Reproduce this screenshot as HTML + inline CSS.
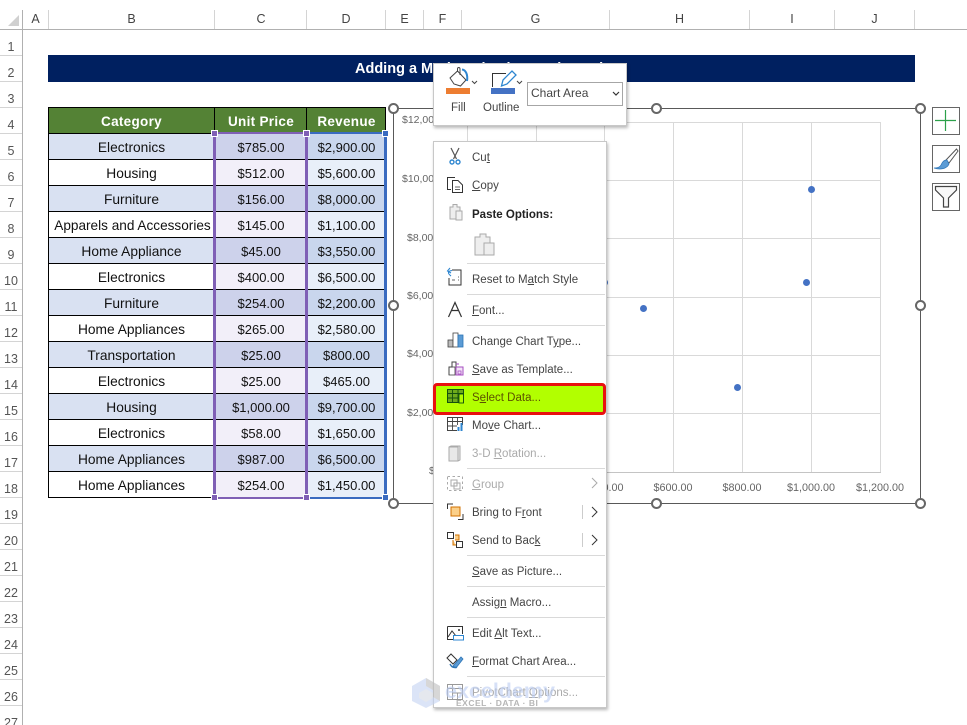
<!DOCTYPE html>
<html><head><meta charset="utf-8">
<style>
html,body{margin:0;padding:0;background:#fff}
#p{position:relative;width:967px;height:725px;overflow:hidden;font-family:"Liberation Sans",sans-serif;background:#fff}
#p div{position:absolute;box-sizing:border-box}
.ch{top:10px;height:19px;line-height:19px;text-align:center;font-size:12.5px;color:#444;border-right:1px solid #d4d4d4}
.rh{left:0;width:22px;height:26px;line-height:35px;text-align:center;font-size:12.5px;color:#555;border-bottom:1px solid #d4d4d4}
.c{height:26px;line-height:30px;text-align:center;font-size:13px;color:#111;white-space:nowrap}
.c[style^="left:48px"]{font-size:13.75px}
.h{font-weight:bold;color:#fff;background:#548235;letter-spacing:.3px}
.m{left:472px;height:16px;line-height:18px;font-size:11.5px;color:#444;white-space:nowrap}
.g{color:#aaa}
.s{left:467px;width:138px;height:1px;background:#d9d9d9}
.hd{width:11px;height:11px;border:2px solid #666;border-radius:50%;background:#fff}
.sq{width:7px;height:7px}
.yl{left:402px;width:60px;font-size:10.5px;color:#666;height:14px;line-height:14px;white-space:nowrap}
.xl{top:481px;width:70px;text-align:center;font-size:10.8px;color:#666;height:14px;line-height:14px}
.gv{top:122px;width:1px;height:350px;background:#d9d9d9}
.gh{left:467px;width:414px;height:1px;background:#d9d9d9}
.dot{width:7px;height:7px;border-radius:50%;background:#4472c4}
svg{position:absolute;overflow:visible}
</style></head><body><div id="p">

<!-- column headers -->
<div style="left:0;top:29px;width:967px;height:1px;background:#b0b0b0"></div>
<div style="left:22px;top:10px;width:1px;height:715px;background:#b0b0b0"></div>
<svg style="left:7px;top:14px" width="13" height="13"><path d="M12 1V12H1Z" fill="#d0d0d0"/></svg>
<div class="ch" style="left:22px;width:27px;padding-left:1px">A</div>
<div class="ch" style="left:49px;width:166px">B</div>
<div class="ch" style="left:215px;width:92px;padding-left:1px">C</div>
<div class="ch" style="left:307px;width:79px">D</div>
<div class="ch" style="left:386px;width:38px">E</div>
<div class="ch" style="left:424px;width:38px">F</div>
<div class="ch" style="left:462px;width:148px">G</div>
<div class="ch" style="left:610px;width:140px">H</div>
<div class="ch" style="left:750px;width:85px">I</div>
<div class="ch" style="left:835px;width:80px">J</div>

<!-- row headers -->
<div class="rh" style="top:30px">1</div><div class="rh" style="top:56px">2</div><div class="rh" style="top:82px">3</div><div class="rh" style="top:108px">4</div><div class="rh" style="top:134px">5</div><div class="rh" style="top:160px">6</div><div class="rh" style="top:186px">7</div><div class="rh" style="top:212px">8</div><div class="rh" style="top:238px">9</div><div class="rh" style="top:264px">10</div><div class="rh" style="top:290px">11</div><div class="rh" style="top:316px">12</div><div class="rh" style="top:342px">13</div><div class="rh" style="top:368px">14</div><div class="rh" style="top:394px">15</div><div class="rh" style="top:420px">16</div><div class="rh" style="top:446px">17</div><div class="rh" style="top:472px">18</div><div class="rh" style="top:498px">19</div><div class="rh" style="top:524px">20</div><div class="rh" style="top:550px">21</div><div class="rh" style="top:576px">22</div><div class="rh" style="top:602px">23</div><div class="rh" style="top:628px">24</div><div class="rh" style="top:654px">25</div><div class="rh" style="top:680px">26</div><div class="rh" style="top:706px">27</div>

<!-- title -->
<div style="left:48px;top:55px;width:867px;height:27px;background:#002060;color:#fff;font-weight:bold;font-size:14.5px;line-height:29px;text-align:left;padding-left:307px;white-space:nowrap">Adding a Marker Line in Excel Graph</div>

<!-- table header -->
<div class="c h" style="left:48px;top:107px;width:167px;font-size:13.5px;line-height:30px">Category</div>
<div class="c h" style="left:215px;top:107px;width:92px;font-size:13.5px;line-height:30px">Unit Price</div>
<div class="c h" style="left:307px;top:107px;width:79px;font-size:13.5px;line-height:30px">Revenue</div>

<!-- rows -->
<div class="c" style="left:48px;top:133px;width:167px;background:#d9e1f2">Electronics</div><div class="c" style="left:215px;top:133px;width:92px;background:#cdd2eb">$785.00</div><div class="c" style="left:307px;top:133px;width:79px;background:#c9d6ed">$2,900.00</div>
<div class="c" style="left:48px;top:159px;width:167px">Housing</div><div class="c" style="left:215px;top:159px;width:92px;background:#f2eff9">$512.00</div><div class="c" style="left:307px;top:159px;width:79px;background:#e8eff9">$5,600.00</div>
<div class="c" style="left:48px;top:185px;width:167px;background:#d9e1f2">Furniture</div><div class="c" style="left:215px;top:185px;width:92px;background:#cdd2eb">$156.00</div><div class="c" style="left:307px;top:185px;width:79px;background:#c9d6ed">$8,000.00</div>
<div class="c" style="left:49px;top:211px;width:167px;font-size:13.6px">Apparels and Accessories</div><div class="c" style="left:215px;top:211px;width:92px;background:#f2eff9">$145.00</div><div class="c" style="left:307px;top:211px;width:79px;background:#e8eff9">$1,100.00</div>
<div class="c" style="left:48px;top:237px;width:167px;background:#d9e1f2">Home Appliance</div><div class="c" style="left:215px;top:237px;width:92px;background:#cdd2eb">$45.00</div><div class="c" style="left:307px;top:237px;width:79px;background:#c9d6ed">$3,550.00</div>
<div class="c" style="left:48px;top:263px;width:167px">Electronics</div><div class="c" style="left:215px;top:263px;width:92px;background:#f2eff9">$400.00</div><div class="c" style="left:307px;top:263px;width:79px;background:#e8eff9">$6,500.00</div>
<div class="c" style="left:48px;top:289px;width:167px;background:#d9e1f2">Furniture</div><div class="c" style="left:215px;top:289px;width:92px;background:#cdd2eb">$254.00</div><div class="c" style="left:307px;top:289px;width:79px;background:#c9d6ed">$2,200.00</div>
<div class="c" style="left:48px;top:315px;width:167px">Home Appliances</div><div class="c" style="left:215px;top:315px;width:92px;background:#f2eff9">$265.00</div><div class="c" style="left:307px;top:315px;width:79px;background:#e8eff9">$2,580.00</div>
<div class="c" style="left:48px;top:341px;width:167px;background:#d9e1f2">Transportation</div><div class="c" style="left:215px;top:341px;width:92px;background:#cdd2eb">$25.00</div><div class="c" style="left:307px;top:341px;width:79px;background:#c9d6ed">$800.00</div>
<div class="c" style="left:48px;top:367px;width:167px">Electronics</div><div class="c" style="left:215px;top:367px;width:92px;background:#f2eff9">$25.00</div><div class="c" style="left:307px;top:367px;width:79px;background:#e8eff9">$465.00</div>
<div class="c" style="left:48px;top:393px;width:167px;background:#d9e1f2">Housing</div><div class="c" style="left:215px;top:393px;width:92px;background:#cdd2eb">$1,000.00</div><div class="c" style="left:307px;top:393px;width:79px;background:#c9d6ed">$9,700.00</div>
<div class="c" style="left:48px;top:419px;width:167px">Electronics</div><div class="c" style="left:215px;top:419px;width:92px;background:#f2eff9">$58.00</div><div class="c" style="left:307px;top:419px;width:79px;background:#e8eff9">$1,650.00</div>
<div class="c" style="left:48px;top:445px;width:167px;background:#d9e1f2">Home Appliances</div><div class="c" style="left:215px;top:445px;width:92px;background:#cdd2eb">$987.00</div><div class="c" style="left:307px;top:445px;width:79px;background:#c9d6ed">$6,500.00</div>
<div class="c" style="left:48px;top:471px;width:167px">Home Appliances</div><div class="c" style="left:215px;top:471px;width:92px;background:#f2eff9">$254.00</div><div class="c" style="left:307px;top:471px;width:79px;background:#e8eff9">$1,450.00</div>

<!-- table grid lines -->
<svg style="left:0;top:0" width="967" height="725"><g stroke="#000" stroke-width="1" shape-rendering="crispEdges"><path d="M48 107.5H385M48 133.5H385M48 159.5H385M48 185.5H385M48 211.5H385M48 237.5H385M48 263.5H385M48 289.5H385M48 315.5H385M48 341.5H385M48 367.5H385M48 393.5H385M48 419.5H385M48 445.5H385M48 471.5H385M48 497.5H385"/><path d="M48.5 107V498M214.5 107V133M306.5 107V133M385.5 107V133"/></g></svg>

<!-- selection -->
<div style="left:213px;top:132px;width:95px;height:367px;border:solid #7f5fb5;border-width:2px 3px"></div>
<div style="left:308px;top:132px;width:79px;height:367px;border:solid #3a6bc0;border-width:2px 3px 2px 0"></div>
<div class="sq" style="left:211px;top:130px;background:#7f5fb5;border:1px solid #fff"></div>
<div class="sq" style="left:303px;top:130px;background:#7f5fb5;border:1px solid #fff"></div>
<div class="sq" style="left:382px;top:130px;background:#3a6bc0;border:1px solid #fff"></div>
<div class="sq" style="left:211px;top:494px;background:#7f5fb5;border:1px solid #fff"></div>
<div class="sq" style="left:303px;top:494px;background:#7f5fb5;border:1px solid #fff"></div>
<div class="sq" style="left:382px;top:494px;background:#3a6bc0;border:1px solid #fff"></div>

<!-- chart -->
<div style="left:393px;top:108px;width:528px;height:396px;border:1px solid #595959;background:#fff"></div>
<div class="gv" style="left:467px"></div><div class="gv" style="left:536px"></div><div class="gv" style="left:604px"></div><div class="gv" style="left:673px"></div><div class="gv" style="left:742px"></div><div class="gv" style="left:811px"></div><div class="gv" style="left:880px"></div>
<div class="gh" style="top:122px"></div><div class="gh" style="top:180px"></div><div class="gh" style="top:238px"></div><div class="gh" style="top:297px"></div><div class="gh" style="top:355px"></div><div class="gh" style="top:413px"></div><div class="gh" style="top:472px;background:#c4c4c4"></div>
<div class="yl" style="top:113px">$12,000.00</div>
<div class="yl" style="top:172px">$10,000.00</div>
<div class="yl" style="top:231px;left:407px">$8,000.00</div>
<div class="yl" style="top:289px;left:407px">$6,000.00</div>
<div class="yl" style="top:347px;left:407px">$4,000.00</div>
<div class="yl" style="top:406px;left:407px">$2,000.00</div>
<div class="yl" style="top:464px;left:429px">$0.00</div>
<div class="xl" style="left:569px">$400.00</div>
<div class="xl" style="left:638px">$600.00</div>
<div class="xl" style="left:707px">$800.00</div>
<div class="xl" style="left:776px">$1,000.00</div>
<div class="xl" style="left:845px">$1,200.00</div>
<div class="dot" style="left:808px;top:186px"></div>
<div class="dot" style="left:803px;top:279px"></div>
<div class="dot" style="left:640px;top:305px"></div>
<div class="dot" style="left:734px;top:384px"></div>
<div class="dot" style="left:601px;top:279px"></div>

<div class="hd" style="left:388px;top:103px"></div>
<div class="hd" style="left:651px;top:103px"></div>
<div class="hd" style="left:915px;top:103px"></div>
<div class="hd" style="left:388px;top:300px"></div>
<div class="hd" style="left:915px;top:300px"></div>
<div class="hd" style="left:388px;top:498px"></div>
<div class="hd" style="left:651px;top:498px"></div>
<div class="hd" style="left:915px;top:498px"></div>

<!-- chart side buttons -->
<div style="left:932px;top:107px;width:28px;height:28px;border:1px solid #666;background:#fff"></div>
<svg style="left:932px;top:107px" width="28" height="28"><path d="M13.500 3V24M3 13.500H24" stroke="#2ca04a" stroke-width="1.200"/></svg>
<div style="left:932px;top:145px;width:28px;height:28px;border:1px solid #666;background:#fff"></div>
<svg style="left:932px;top:145px" width="28" height="28"><path d="M24.500 4 14 15 17 18 26 6Z" fill="#fff" stroke="#555"/><path d="M15 15C11 15 10 18 9 20 8 22 5 23 2 23 8 25 15 24 17 19Z" fill="#5b9bd5" stroke="#2e75b6" stroke-width=".7"/></svg>
<div style="left:932px;top:183px;width:28px;height:28px;border:1px solid #666;background:#fff"></div>
<svg style="left:932px;top:183px" width="28" height="28"><path d="M3.500 3.500H24.500V7L16.500 15V24H11.500V15L3.500 7Z" fill="#f8f8f8" stroke="#444" stroke-width="1.200"/></svg>

<!-- mini toolbar -->
<div style="left:433px;top:63px;width:194px;height:63px;background:#fff;border:1px solid #c8c8c8;box-shadow:1px 2px 3px rgba(0,0,0,.28)"></div>
<svg style="left:433px;top:63px" width="194" height="63">
<path d="M17 15 24.500 8 33 17 27.500 23 21 21Z" fill="#fff" stroke="#444"/><path d="M24.500 9V6C24.500 4 27 4 27 6V12" fill="none" stroke="#444"/><path d="M29 6.500C33 7 35 12 34 18" fill="none" stroke="#2e86d0" stroke-width="2"/>
<rect x="13" y="25" width="24" height="6" fill="#ed7d31"/>
<path d="M39 18 41.500 20.500 44 18" fill="none" stroke="#444"/>
<path d="M73 10.500H59.500V24" fill="none" stroke="#333" stroke-width="1"/><path d="M70 17 79 8 83 12 74 21 68.500 23Z" fill="#fff" stroke="#2e86d0" stroke-width="1.300"/>
<rect x="58" y="25" width="24" height="6" fill="#4472c4"/>
<path d="M84 18 86.500 20.500 89 18" fill="none" stroke="#444"/>
</svg>
<div style="left:451px;top:100px;font-size:11.500px;color:#444;height:14px;line-height:16px">Fill</div>
<div style="left:483px;top:100px;font-size:11.500px;color:#444;height:14px;line-height:16px">Outline</div>
<div style="left:527px;top:82px;width:96px;height:24px;border:1px solid #a6a6a6;background:#fff;font-size:12px;line-height:21px;color:#444;padding-left:3px">Chart Area</div>
<svg style="left:612px;top:91px" width="9" height="6"><path d="M1 1 4 4 7 1" fill="none" stroke="#333" stroke-width="1.200"/></svg>

<!-- context menu -->
<div style="left:433px;top:141px;width:174px;height:567px;background:#fff;border:1px solid #c8c8c8;box-shadow:1px 2px 3px rgba(0,0,0,.28)"></div>

<div style="left:433px;top:383px;width:173px;height:32px;background:#b2ff00;border:3px solid #e81010;border-radius:4px"></div>

<div class="m" style="top:149px">Cu<u>t</u></div>
<div class="m" style="top:177px"><u>C</u>opy</div>
<div class="m" style="top:206px;font-weight:bold;color:#222">Paste Options:</div>
<div class="s" style="top:263px"></div>
<div class="m" style="top:271px">Reset to M<u>a</u>tch Style</div>
<div class="s" style="top:294px"></div>
<div class="m" style="top:302px"><u>F</u>ont...</div>
<div class="s" style="top:325px"></div>
<div class="m" style="top:333px">Change Chart T<u>y</u>pe...</div>
<div class="m" style="top:361px"><u>S</u>ave as Template...</div>
<div class="m" style="top:389px;color:#5c5200">S<u>e</u>lect Data...</div>
<div class="m" style="top:417px">Mo<u>v</u>e Chart...</div>
<div class="m g" style="top:445px">3-D <u>R</u>otation...</div>
<div class="s" style="top:468px"></div>
<div class="m g" style="top:476px"><u>G</u>roup</div>
<div class="m" style="top:504px">Bring to F<u>r</u>ont</div>
<div class="m" style="top:532px">Send to Bac<u>k</u></div>
<div class="s" style="top:555px"></div>
<div class="m" style="top:563px"><u>S</u>ave as Picture...</div>
<div class="s" style="top:586px"></div>
<div class="m" style="top:594px">Assig<u>n</u> Macro...</div>
<div class="s" style="top:617px"></div>
<div class="m" style="top:625px">Edit <u>A</u>lt Text...</div>
<div class="m" style="top:653px"><u>F</u>ormat Chart Area...</div>
<div class="s" style="top:676px"></div>
<div class="m g" style="top:684px">PivotChart <u>O</u>ptions...</div>

<!-- menu icons -->
<svg style="left:0;top:0" width="967" height="725" fill="none">
<!-- cut -->
<path d="M451 148 456.500 159M459 148 453.500 159" stroke="#555" stroke-width="1.200"/><circle cx="452" cy="162" r="2" stroke="#2e86d0" stroke-width="1.400"/><circle cx="458" cy="162" r="2" stroke="#2e86d0" stroke-width="1.400"/>
<!-- copy -->
<path d="M451 189.500H447.500V177.500H455" stroke="#333"/><path d="M452.500 180.500H458L462.500 185V192.500H452.500Z" fill="#fff" stroke="#333"/><path d="M455 187H460M455 189.500H460" stroke="#333" stroke-width=".8"/>
<!-- paste small -->
<path d="M450 207H453V204.500H457V207H460V211H458V219H450Z" fill="#eee" stroke="#aaa"/><rect x="456" y="211" width="6" height="9" fill="#f2f2f2" stroke="#aaa"/>
<!-- paste large -->
<path d="M475 237H480V234H486V237H490V243H486V255H475Z" fill="#eee" stroke="#aaa"/><rect x="484" y="243" width="10" height="12" fill="#eee" stroke="#aaa"/>
<!-- reset -->
<path d="M452 270H461V285H449V278" stroke="#333"/><path d="M451 276C447 273 448 271 452 270.500M450 268 447.500 271 451 273" stroke="#2e86d0" stroke-width="1.100"/><path d="M452 280H455M458 277H459M458 280H459" stroke="#333" stroke-width=".8"/>
<!-- A -->
<path d="M448.500 317 455 302.500 461.500 317M451 310.500H459" stroke="#333" stroke-width="1.200"/>
<!-- change chart -->
<rect x="448" y="340" width="5" height="7" fill="#bbb" stroke="#444" stroke-width=".8"/><rect x="453" y="333" width="5" height="14" fill="#fff" stroke="#444" stroke-width=".8"/><rect x="458" y="335" width="5" height="12" fill="#5b9bd5" stroke="#2e75b6" stroke-width=".8"/>
<!-- save template -->
<path d="M449 375V367H452V362H456V367" stroke="#444"/><rect x="449" y="367" width="6" height="8" stroke="#444" stroke-width=".8"/><path d="M456 364H459M456 367H463V375H456Z" stroke="#a64dc0" fill="#f3e6f7"/><rect x="458" y="371" width="3" height="3" stroke="#a64dc0" stroke-width=".8"/>
<!-- select data -->
<rect x="447.500" y="389.500" width="16" height="13" stroke="#14500e" fill="#6eaa1c"/><path d="M447.500 393.500H463.500M447.500 398H459M452.500 389.500V402.500M458 389.500V402.500" stroke="#14500e" stroke-width=".9"/><rect x="459" y="394" width="4.500" height="9" fill="#b2ff00" stroke="#14500e" stroke-width=".9"/>
<!-- move chart -->
<rect x="447.500" y="417.500" width="15" height="13" stroke="#444"/><path d="M447.500 421.500H462.500M447.500 426H458M452.500 417.500V430.500M457.500 417.500V426" stroke="#444" stroke-width=".9"/><rect x="457" y="425" width="6" height="6" fill="#fff"/><path d="M458.500 431V427M461.500 431V423" stroke="#2e86d0" stroke-width="2"/>
<!-- 3d -->
<path d="M449 447 451 446H460V460L458 461H449Z" fill="#e8e8e8" stroke="#aaa"/><path d="M449 447H458V461" stroke="#aaa"/>
<!-- group -->
<rect x="447.500" y="476.500" width="15" height="14" stroke="#aaa" stroke-dasharray="2.500 2.500"/><rect x="451" y="480" width="6" height="6" stroke="#aaa"/><rect x="454" y="483" width="6" height="6" stroke="#aaa"/>
<path d="M592 478 597 483 592 488" stroke="#aaa"/>
<!-- bring front -->
<path d="M447.500 509V504H453M458 519.500H463V514" stroke="#333"/><rect x="451" y="507" width="9" height="9" fill="#fbd08a" stroke="#d07000"/>
<path d="M592 507 597 512 592 517" stroke="#333"/><path d="M582.500 505V519" stroke="#ccc"/>
<!-- send back -->
<rect x="447.500" y="532.500" width="6" height="6" stroke="#333"/><rect x="456.500" y="541.500" width="6" height="6" stroke="#333"/><path d="M455 535H459V540H455M453 540V545H456" stroke="#d07000" fill="#fbd08a"/>
<path d="M592 535 597 540 592 545" stroke="#333"/><path d="M582.500 533V547" stroke="#ccc"/>
<!-- alt text -->
<path d="M447.500 626.500H462.500V634M456 639.500H447.500V626.500" stroke="#333"/><path d="M448 637 452 631 456 636" stroke="#333"/><circle cx="459" cy="630" r="1" fill="#333"/><rect x="453.500" y="635.500" width="10" height="4.500" fill="#fff" stroke="#2e86d0"/>
<!-- format area -->
<path d="M447 658 451 654 457 660 453 664Z" stroke="#333"/><path d="M453 666 461 657 463 659 456 668Z" fill="#5b9bd5" stroke="#2e75b6" stroke-width=".8"/><path d="M450 664C452 668 455 668 457 667" stroke="#2e75b6" stroke-width="1.400"/>
<!-- pivot -->
<rect x="447.500" y="684.500" width="15" height="15" stroke="#999"/><path d="M447.500 688.500H462.500M452.500 684.500V699.500M452.500 693H462.500M457.500 693V699.500" stroke="#999" stroke-width=".9"/>
</svg>

<!-- watermark -->
<svg style="left:411px;top:677px;opacity:.6" width="32" height="32"><path d="M15 1 29 9V24L15 31 1 24V9Z" fill="#c4d3f3"/><path d="M15 1 29 9V24L22 20V13L15 9Z" fill="#bdbdbd"/><path d="M15 12 22 16V21L15 25 8 21V16Z" fill="#ddd" opacity=".7"/></svg>
<div style="left:445px;top:675px;font-size:21.500px;font-weight:bold;color:#bccdf2;opacity:.6;height:32px;line-height:32px;white-space:nowrap">exceldemy</div>
<div style="left:456px;top:697px;font-size:8.500px;font-weight:bold;color:#aaa;letter-spacing:.5px;opacity:.85;height:12px;line-height:12px;white-space:nowrap">EXCEL · DATA · BI</div>

</div></body></html>
